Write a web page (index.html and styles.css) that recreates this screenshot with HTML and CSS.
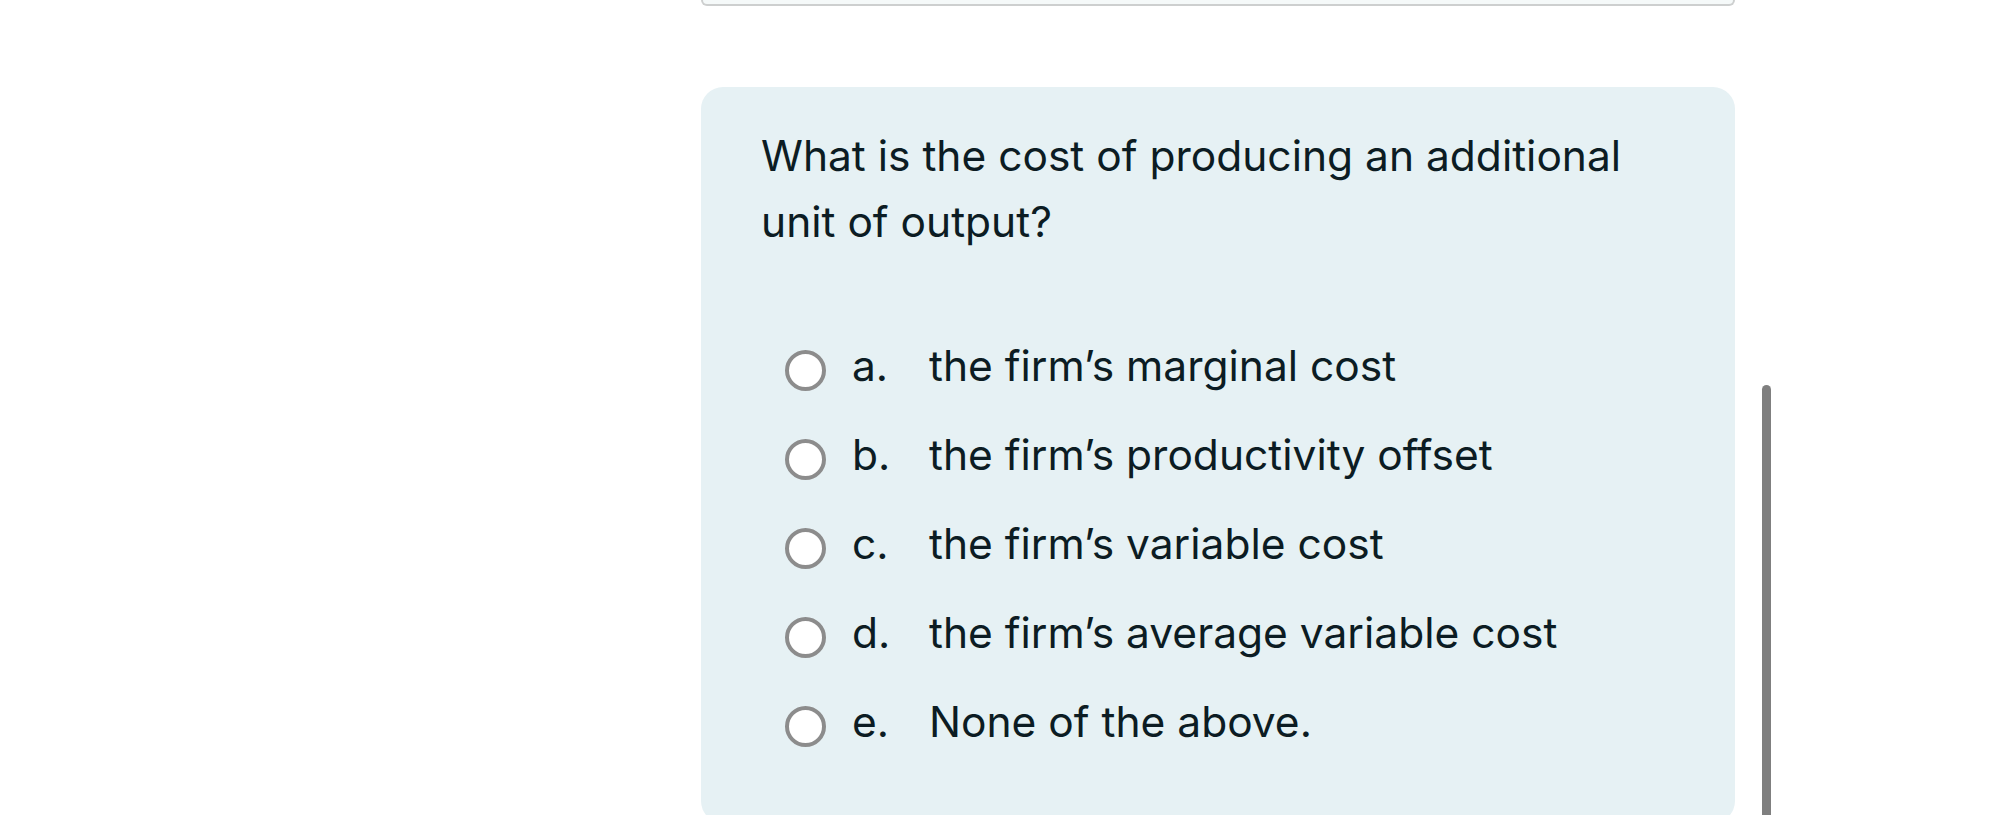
FILE: index.html
```html
<!DOCTYPE html>
<html lang="en">
<head>
<meta charset="utf-8">
<title>Question</title>
<link rel="stylesheet" href="styles.css">
</head>
<body>
<div class="page">
  <main class="column">
    <div class="prev-box"></div>
    <section class="card">
      <p class="question">What is the cost of producing an additional unit of output?</p>
      <ul class="options">
        <li class="option"><span class="radio"></span><span class="letter">a.</span><span class="text">the firm’s marginal cost</span></li>
        <li class="option"><span class="radio"></span><span class="letter">b.</span><span class="text">the firm’s productivity offset</span></li>
        <li class="option"><span class="radio"></span><span class="letter">c.</span><span class="text">the firm’s variable cost</span></li>
        <li class="option"><span class="radio"></span><span class="letter">d.</span><span class="text">the firm’s average variable cost</span></li>
        <li class="option"><span class="radio"></span><span class="letter">e.</span><span class="text">None of the above.</span></li>
      </ul>
    </section>
  </main>
  <div class="scroll-indicator"></div>
</div>
</body>
</html>
```
FILE: styles.css
```css
html, body {
  margin: 0;
  padding: 0;
  background: #ffffff;
  height: 100%;
  overflow: hidden;
}

.page {
  position: relative;
  height: 815px;
  overflow: hidden;
  font-family: Inter, "Liberation Sans", Arial, sans-serif;
  color: #0c1c23;
}

.column {
  margin-left: 701px;
  width: 1034px;
  display: flex;
  flex-direction: column;
  gap: 81px;
}

.prev-box {
  height: 4px;
  background: #f5f9f9;
  border: 2px solid #cdcfcf;
  border-top: none;
  border-radius: 0 0 7px 7px;
}

.card {
  background: #e6f1f4;
  border-radius: 22px;
  padding: 36px 60px 68px 60px;
}

.question {
  margin: 0;
  font-size: 42.5px;
  line-height: 66px;
  font-weight: 400;
  padding-right: 40px;
}

.options {
  list-style: none;
  margin: 78px 0 0 0;
  padding: 0 0 0 24px;
  display: flex;
  flex-direction: column;
  gap: 23px;
}

.option {
  display: flex;
  align-items: flex-start;
  font-size: 42.5px;
  line-height: 66px;
}

.radio {
  flex: none;
  box-sizing: border-box;
  width: 41px;
  height: 41px;
  margin-top: 17px;
  border: 4px solid #8c8c8c;
  border-radius: 50%;
  background: #ffffff;
}

.letter {
  flex: none;
  width: 77px;
  margin-left: 26px;
}

.scroll-indicator {
  position: absolute;
  left: 1762px;
  top: 385px;
  width: 9px;
  height: 460px;
  border-radius: 5px;
  background: #7f7f7f;
}
```
